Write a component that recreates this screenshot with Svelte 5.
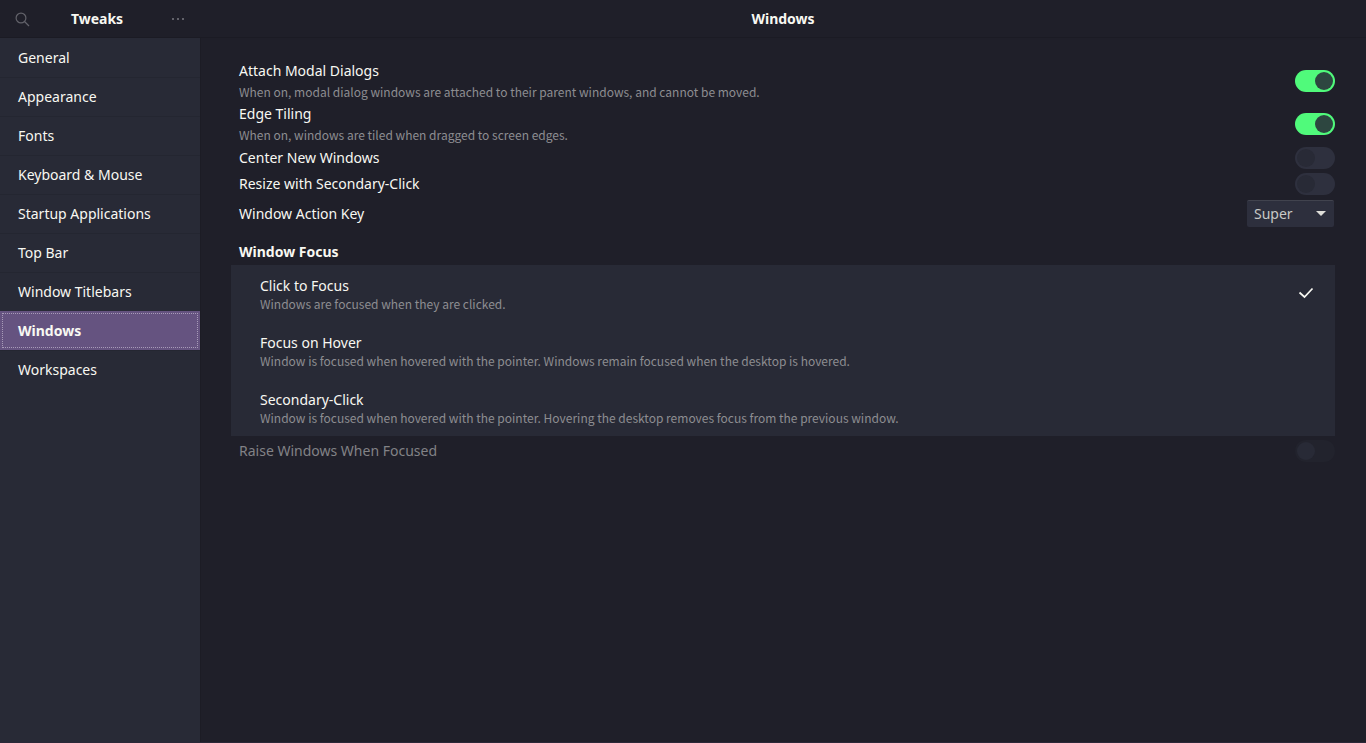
<script lang="ts">
  const pages = [
    'General',
    'Appearance',
    'Fonts',
    'Keyboard & Mouse',
    'Startup Applications',
    'Top Bar',
    'Window Titlebars',
    'Windows',
    'Workspaces'
  ];

  let current = $state('Windows');
  let focusMode = $state('click');
  let actionKey = $state('Super');

  let tweaks = $state([
    {
      id: 'attach-modal',
      label: 'Attach Modal Dialogs',
      description: 'When on, modal dialog windows are attached to their parent windows, and cannot be moved.',
      on: true
    },
    {
      id: 'edge-tiling',
      label: 'Edge Tiling',
      description: 'When on, windows are tiled when dragged to screen edges.',
      on: true
    },
    { id: 'center-new', label: 'Center New Windows', description: '', on: false },
    { id: 'resize-secondary', label: 'Resize with Secondary-Click', description: '', on: false }
  ]);

  const focusModes = [
    {
      id: 'click',
      label: 'Click to Focus',
      description: 'Windows are focused when they are clicked.'
    },
    {
      id: 'sloppy',
      label: 'Focus on Hover',
      description: 'Window is focused when hovered with the pointer. Windows remain focused when the desktop is hovered.'
    },
    {
      id: 'mouse',
      label: 'Secondary-Click',
      description: 'Window is focused when hovered with the pointer. Hovering the desktop removes focus from the previous window.'
    }
  ];
</script>

<div class="window">
  <header class="titlebar">
    <div class="titlebar-side">
      <button class="icon-button" aria-label="Search">
        <svg width="16" height="16" viewBox="0 0 16 16" fill="none" stroke="currentColor" stroke-width="1.2">
          <circle cx="7" cy="7" r="4.9" />
          <path d="M10.5 10.5l4.5 4.5" />
        </svg>
      </button>
      <h1>Tweaks</h1>
      <button class="icon-button menu" aria-label="Menu">
        <svg width="16" height="16" viewBox="0 0 16 16" fill="currentColor">
          <rect x="2" y="7" width="2" height="2" />
          <rect x="7" y="7" width="2" height="2" />
          <rect x="12" y="7" width="2" height="2" />
        </svg>
      </button>
    </div>
    <h2 class="page-title">{current}</h2>
  </header>

  <div class="body">
    <nav class="sidebar">
      {#each pages as page}
        <button class="page" class:selected={page === current} onclick={() => (current = page)}>
          {page}
        </button>
      {/each}
    </nav>

    <main class="content">
      {#each tweaks as tweak}
        <div class="row" class:described={tweak.description}>
          <div class="text">
            <label for={tweak.id}>{tweak.label}</label>
            {#if tweak.description}
              <p>{tweak.description}</p>
            {/if}
          </div>
          <input class="switch" type="checkbox" role="switch" id={tweak.id} bind:checked={tweak.on} />
        </div>
      {/each}

      <div class="row action-key">
        <label for="action-key">Window Action Key</label>
        <div class="dropdown">
          <select id="action-key" bind:value={actionKey}>
            <option>Super</option>
            <option>Alt</option>
            <option>Disabled</option>
          </select>
          <svg width="10" height="5" viewBox="0 0 10 5" fill="currentColor">
            <path d="M0 0h10L5 5z" />
          </svg>
        </div>
      </div>

      <h3>Window Focus</h3>
      <div class="focus-list">
        {#each focusModes as mode}
          <button class="focus-mode" aria-pressed={mode.id === focusMode} onclick={() => (focusMode = mode.id)}>
            <span class="focus-text">
              <span class="focus-label">{mode.label}</span>
              <span class="focus-description">{mode.description}</span>
            </span>
            {#if mode.id === focusMode}
              <svg width="16" height="16" viewBox="0 0 16 16" fill="none" stroke="currentColor" stroke-width="1.7">
                <path d="M1.5 5.5l5 4.5L14.5 1.5" />
              </svg>
            {/if}
          </button>
        {/each}
      </div>

      <div class="row raise">
        <label for="auto-raise">Raise Windows When Focused</label>
        <input class="switch" type="checkbox" role="switch" id="auto-raise" disabled />
      </div>
    </main>
  </div>
</div>

<style>
  :global(body) {
    background: #1f1f29;
  }

  .window {
    display: flex;
    flex-direction: column;
    min-height: 100vh;
    box-sizing: border-box;
    border-bottom: 1px solid #2b2838;
    color: #f8f8f2;
    font-family: 'Noto Sans', sans-serif;
    font-size: 14px;
    line-height: 22px;
  }

  button,
  select {
    border: 0;
    margin: 0;
    color: inherit;
    font: inherit;
  }

  h1,
  h2,
  h3,
  p {
    margin: 0;
    font-size: 14px;
  }

  .titlebar {
    display: flex;
    height: 38px;
    box-sizing: border-box;
    border-bottom: 1px solid #1b1b24;
  }

  .titlebar-side {
    display: flex;
    width: 200px;
    align-items: center;
    justify-content: space-between;
    box-sizing: border-box;
    padding: 0 14px;
  }

  .icon-button {
    display: flex;
    padding: 0;
    background: none;
    color: #62626a;
  }

  .icon-button.menu {
    padding-left: 6px;
  }

  .page-title {
    flex: 1;
    align-self: center;
    text-align: center;
  }

  .body {
    display: flex;
    flex: 1;
  }

  .sidebar {
    width: 200px;
    flex: none;
    background: #282a36;
  }

  .page {
    display: block;
    width: 100%;
    height: 39px;
    padding: 0 18px;
    border-top: 1px solid #242631;
    background: none;
    text-align: left;
  }

  .page:first-child {
    border-top-color: transparent;
  }

  .page.selected {
    border-top-color: #655380;
    background: #655380;
    font-weight: bold;
    outline: 1px dotted #a89bb8;
    outline-offset: -3px;
  }

  .content {
    flex: 1;
    padding: 21px 31px 21px 30px;
    border-left: 1px solid #1c1c25;
  }

  .row {
    display: flex;
    align-items: center;
    justify-content: space-between;
    min-height: 26px;
    padding-left: 8px;
  }

  .row.described {
    height: 42px;
    padding-top: 1px;
  }

  .row label {
    display: block;
  }

  .row p,
  .focus-description {
    color: #8d8d91;
    font-family: 'Noto Sans CJK SC', 'Noto Sans', sans-serif;
    font-size: 12px;
  }

  .row p {
    line-height: 20px;
  }

  .switch {
    display: flex;
    align-items: center;
    width: 40px;
    height: 22px;
    flex: none;
    box-sizing: border-box;
    margin: 0;
    padding: 0 2px;
    border-radius: 11px;
    background: #2e303e;
    appearance: none;
  }

  .switch::before {
    width: 18px;
    height: 18px;
    border-radius: 50%;
    background: #282a36;
    content: '';
  }

  .switch:checked {
    justify-content: flex-end;
    background: #50fa7b;
  }

  .switch:checked::before {
    background: #2d4640;
  }

  .switch:disabled {
    background: #22232d;
  }

  .action-key {
    min-height: 33px;
  }

  .dropdown {
    position: relative;
    margin-right: 1px;
    color: #c8c8c6;
  }

  .dropdown select {
    display: block;
    width: 87px;
    height: 27px;
    padding: 0 7px;
    border-top: 1px solid #41434e;
    border-radius: 2px;
    background: #2d2f3d;
    appearance: none;
  }

  .dropdown svg {
    position: absolute;
    top: 11px;
    right: 8px;
    color: #deded9;
    pointer-events: none;
  }

  h3 {
    padding: 11px 8px 2px;
  }

  .focus-list {
    background: #282a36;
  }

  .focus-mode {
    display: flex;
    width: 100%;
    height: 57px;
    align-items: center;
    justify-content: space-between;
    padding: 2px 21px 0 29px;
    background: none;
    text-align: left;
  }

  .focus-text {
    display: flex;
    flex-direction: column;
    line-height: 18px;
  }

  .raise {
    min-height: 30px;
    color: #828286;
  }
</style>
